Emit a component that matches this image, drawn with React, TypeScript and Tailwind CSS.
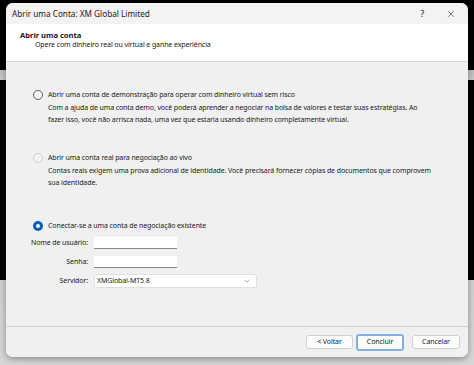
import { ChevronDown, X } from "lucide-react";

const font = { fontFamily: '"Noto Sans", "Open Sans", sans-serif' };

const Radio = ({ checked, disabled }: { checked?: boolean; disabled?: boolean }) => {
  if (checked) {
    return (
      <span className="flex h-[10px] w-[10px] items-center justify-center rounded-full bg-[#005fb8]">
        <span className="h-[4px] w-[4px] rounded-full bg-white" />
      </span>
    );
  }
  return (
    <span
      className={
        disabled
          ? "h-[10px] w-[10px] rounded-full border border-[#cfcfcf] bg-[#f3f3f3]"
          : "h-[10px] w-[10px] rounded-full border border-[#5c5c5c] bg-[#f7f7f7]"
      }
    />
  );
};

const Option = ({
  label,
  desc,
  checked,
  disabled,
  className,
}: {
  label: string;
  desc?: string[];
  checked?: boolean;
  disabled?: boolean;
  className?: string;
}) => (
  <div className={className}>
    <div className="flex h-[12px] items-center">
      <div className="flex w-[42px] justify-end pr-[5px]">
        <Radio checked={checked} disabled={disabled} />
      </div>
      <span className="whitespace-nowrap text-[#1a1a1a]">{label}</span>
    </div>
    {desc && (
      <div className="mt-[1px] pl-[42px] text-[#1a1a1a]">
        {desc.map((d) => (
          <div key={d} className="h-[12px] whitespace-nowrap leading-[12px]">
            {d}
          </div>
        ))}
      </div>
    )}
  </div>
);

const Field = ({ label, children }: { label: string; children: React.ReactNode }) => (
  <div className="flex h-[19px] items-center">
    <span className="w-[88px] whitespace-nowrap pr-[6px] text-right text-[#1a1a1a]">{label}</span>
    {children}
  </div>
);

export default function App() {
  return (
    <div
      className="h-[365px] w-[474px] overflow-hidden bg-[linear-gradient(to_bottom,#000_0px,#000_70px,#bdbdbd_70px,#c9c9c9_80px,#000_80px,#000_280px,#cfcfcf_280px,#d6d6d6_365px)] pl-[6px] pt-[3px] text-[7px] leading-[12px] tracking-[-0.1px]"
      style={font}
    >
      <div className="flex h-[354px] w-[462px] flex-col overflow-hidden rounded-[7px] bg-[#f0f0f0] shadow-[0_2px_6px_rgba(0,0,0,0.35)]">
        {/* title bar */}
        <div className="flex h-[21px] items-center justify-between bg-[#f3f3f3] pl-[6px] pr-[12px]">
          <span className="text-[8.2px] tracking-normal text-[#1a1a1a]">Abrir uma Conta: XM Global Limited</span>
          <div className="flex items-center gap-[22px] text-[#1a1a1a]">
            <span className="text-[9px]">?</span>
            <X className="h-[10px] w-[10px]" strokeWidth={1.3} />
          </div>
        </div>

        {/* header */}
        <div className="flex h-[38px] flex-col border-b border-[#d6d6d6] bg-white pl-[14px] pt-[5px]">
          <span className="text-[7.6px] font-bold tracking-normal text-[#1a1a1a]">Abrir uma conta</span>
          <span className="-mt-[2px] pl-[15px] text-[#1a1a1a]">
            Opere com dinheiro real ou virtual e ganhe experiência
          </span>
        </div>

        {/* body */}
        <div className="flex-1 border-b border-[#d0d0d0] bg-[#f0f0f0] pt-[27px]">
          <Option
            label="Abrir uma conta de demonstração para operar com dinheiro virtual sem risco"
            desc={[
              "Com a ajuda de uma conta demo, você poderá aprender a negociar na bolsa de valores e testar suas estratégias. Ao",
              "fazer isso, você não arrisca nada, uma vez que estaria usando dinheiro completamente virtual.",
            ]}
          />
          <Option
            className="mt-[26px]"
            disabled
            label="Abrir uma conta real para negociação ao vivo"
            desc={[
              "Contas reais exigem uma prova adicional de identidade. Você precisará fornecer cópias de documentos que comprovem",
              "sua identidade.",
            ]}
          />
          <Option className="mt-[31px]" checked label="Conectar-se a uma conta de negociação existente" />

          <div className="mt-[1px]">
            <Field label="Nome de usuário:">
              <div className="h-[12px] w-[83px] border-b border-[#8a8a8a] bg-white" />
            </Field>
            <Field label="Senha:">
              <div className="h-[12px] w-[83px] border-b border-[#8a8a8a] bg-white" />
            </Field>
            <Field label="Servidor:">
              <div className="flex h-[14px] w-[163px] items-center justify-between rounded-[2px] border border-[#e0e0e0] bg-white pl-[2px] pr-[5px]">
                <span className="text-[#1a1a1a]">XMGlobal-MT5 8</span>
                <ChevronDown className="h-[8px] w-[8px] text-[#555]" strokeWidth={1.5} />
              </div>
            </Field>
          </div>
        </div>

        {/* footer */}
        <div className="flex h-[30px] items-center justify-end bg-[#f0f0f0] pr-[8px]">
          <button className="flex h-[14px] w-[47px] items-center justify-center rounded-[3px] border border-[#d0d0d0] bg-[#fdfdfd] text-[#1a1a1a]">
            &lt; Voltar
          </button>
          <button className="ml-[3px] flex h-[17px] w-[48px] items-center justify-center rounded-[3px] border-2 border-[#7fb2e0] bg-[#fdfdfd] text-[#1a1a1a]">
            Concluir
          </button>
          <button className="ml-[8px] flex h-[14px] w-[48px] items-center justify-center rounded-[3px] border border-[#d0d0d0] bg-[#fdfdfd] text-[#1a1a1a]">
            Cancelar
          </button>
        </div>
      </div>
    </div>
  );
}
